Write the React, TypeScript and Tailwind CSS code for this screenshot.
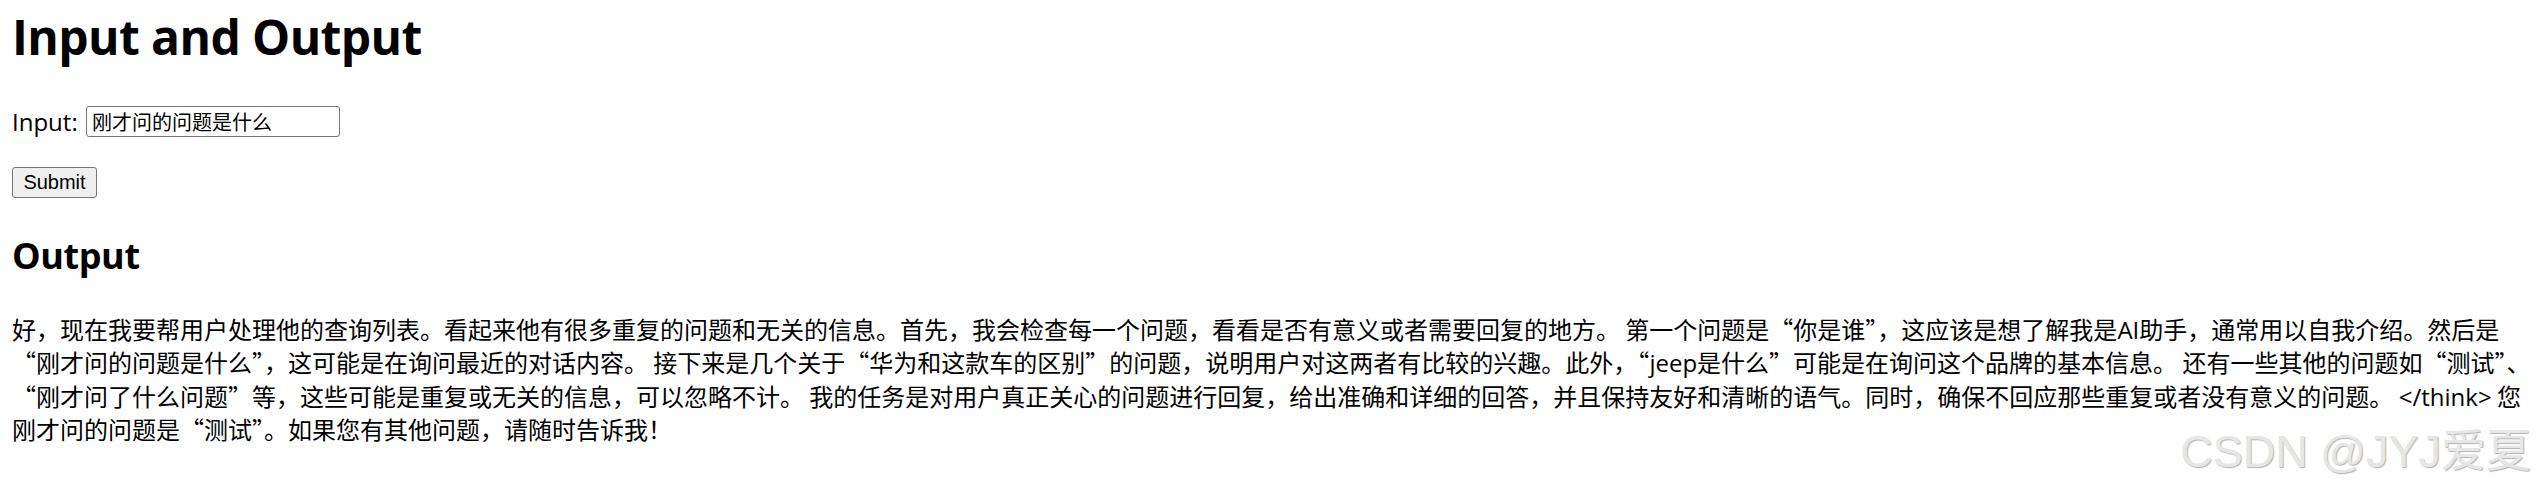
import { useState } from 'react';

function Latin({ children }: { children: React.ReactNode }) {
  return <span className="font-['Open_Sans',sans-serif]">{children}</span>;
}

export default function App() {
  const [query, setQuery] = useState('刚才问的问题是什么');

  return (
    <main className="relative min-h-screen bg-white px-[12px] pt-[5px] text-black">
      <h1 className="font-['Open_Sans','Noto_Sans_CJK_SC',sans-serif] text-[48px] leading-[64px] font-bold tracking-[-0.6px]">
        Input and Output
      </h1>

      <div className="mt-[37px] flex h-[31px] items-center">
        <label
          className="w-[74px] font-['Open_Sans','Noto_Sans_CJK_SC',sans-serif] text-[24px] leading-[31px]"
          htmlFor="query"
        >
          Input:
        </label>
        <input
          className="h-[31px] w-[254px] rounded-[3px] border border-[#767676] bg-white px-[5px] font-['Noto_Sans_CJK_SC',sans-serif] text-[20px] leading-[29px] text-black outline-none"
          id="query"
          onChange={(e) => setQuery(e.target.value)}
          type="text"
          value={query}
        />
      </div>

      <button
        className="mt-[30px] block h-[31px] w-[85px] rounded-[3px] border border-[#767676] bg-[#efefef] font-['Liberation_Sans',Arial,sans-serif] text-[20px] leading-[29px] text-black"
        type="button"
      >
        Submit
      </button>

      <h2 className="mt-[34px] font-['Open_Sans','Noto_Sans_CJK_SC',sans-serif] text-[36px] leading-[48px] font-bold tracking-[-0.4px]">
        Output
      </h2>

      <p className="mt-[33px] whitespace-nowrap font-['Noto_Sans_CJK_SC',sans-serif] text-[24px] leading-[32.3px]">
        好，现在我要帮用户处理他的查询列表。看起来他有很多重复的问题和无关的信息。首先，我会检查每一个问题，看看是否有意义或者需要回复的地方。
        第一个问题是“你是谁”，这应该是想了解我是<Latin>AI</Latin>助手，通常用以自我介绍。然后是
        <br />
        “刚才问的问题是什么”，这可能是在询问最近的对话内容。 接下来是几个关于“华为和这款车的区别”的问题，说明用户对这两者有比较的兴趣。此外，“
        <Latin>jeep</Latin>是什么”可能是在询问这个品牌的基本信息。 还有一些其他的问题如“测试”、
        <br />
        “刚才问了什么问题”等，这些可能是重复或无关的信息，可以忽略不计。 我的任务是对用户真正关心的问题进行回复，给出准确和详细的回答，并且保持友好和清晰的语气。同时，确保不回应那些重复或者没有意义的问题。{' '}
        <Latin>&lt;/think&gt;</Latin> 您
        <br />
        刚才问的问题是“测试”。如果您有其他问题，请随时告诉我！
      </p>

      <div className="pointer-events-none absolute top-[429px] right-[5px] font-['Liberation_Sans','Noto_Sans_CJK_SC',sans-serif] text-[45px] leading-none text-[#e6e6e6] [text-shadow:1px_1px_1px_rgba(0,0,0,0.3)]">
        CSDN @JYJ爱夏
      </div>
    </main>
  );
}
